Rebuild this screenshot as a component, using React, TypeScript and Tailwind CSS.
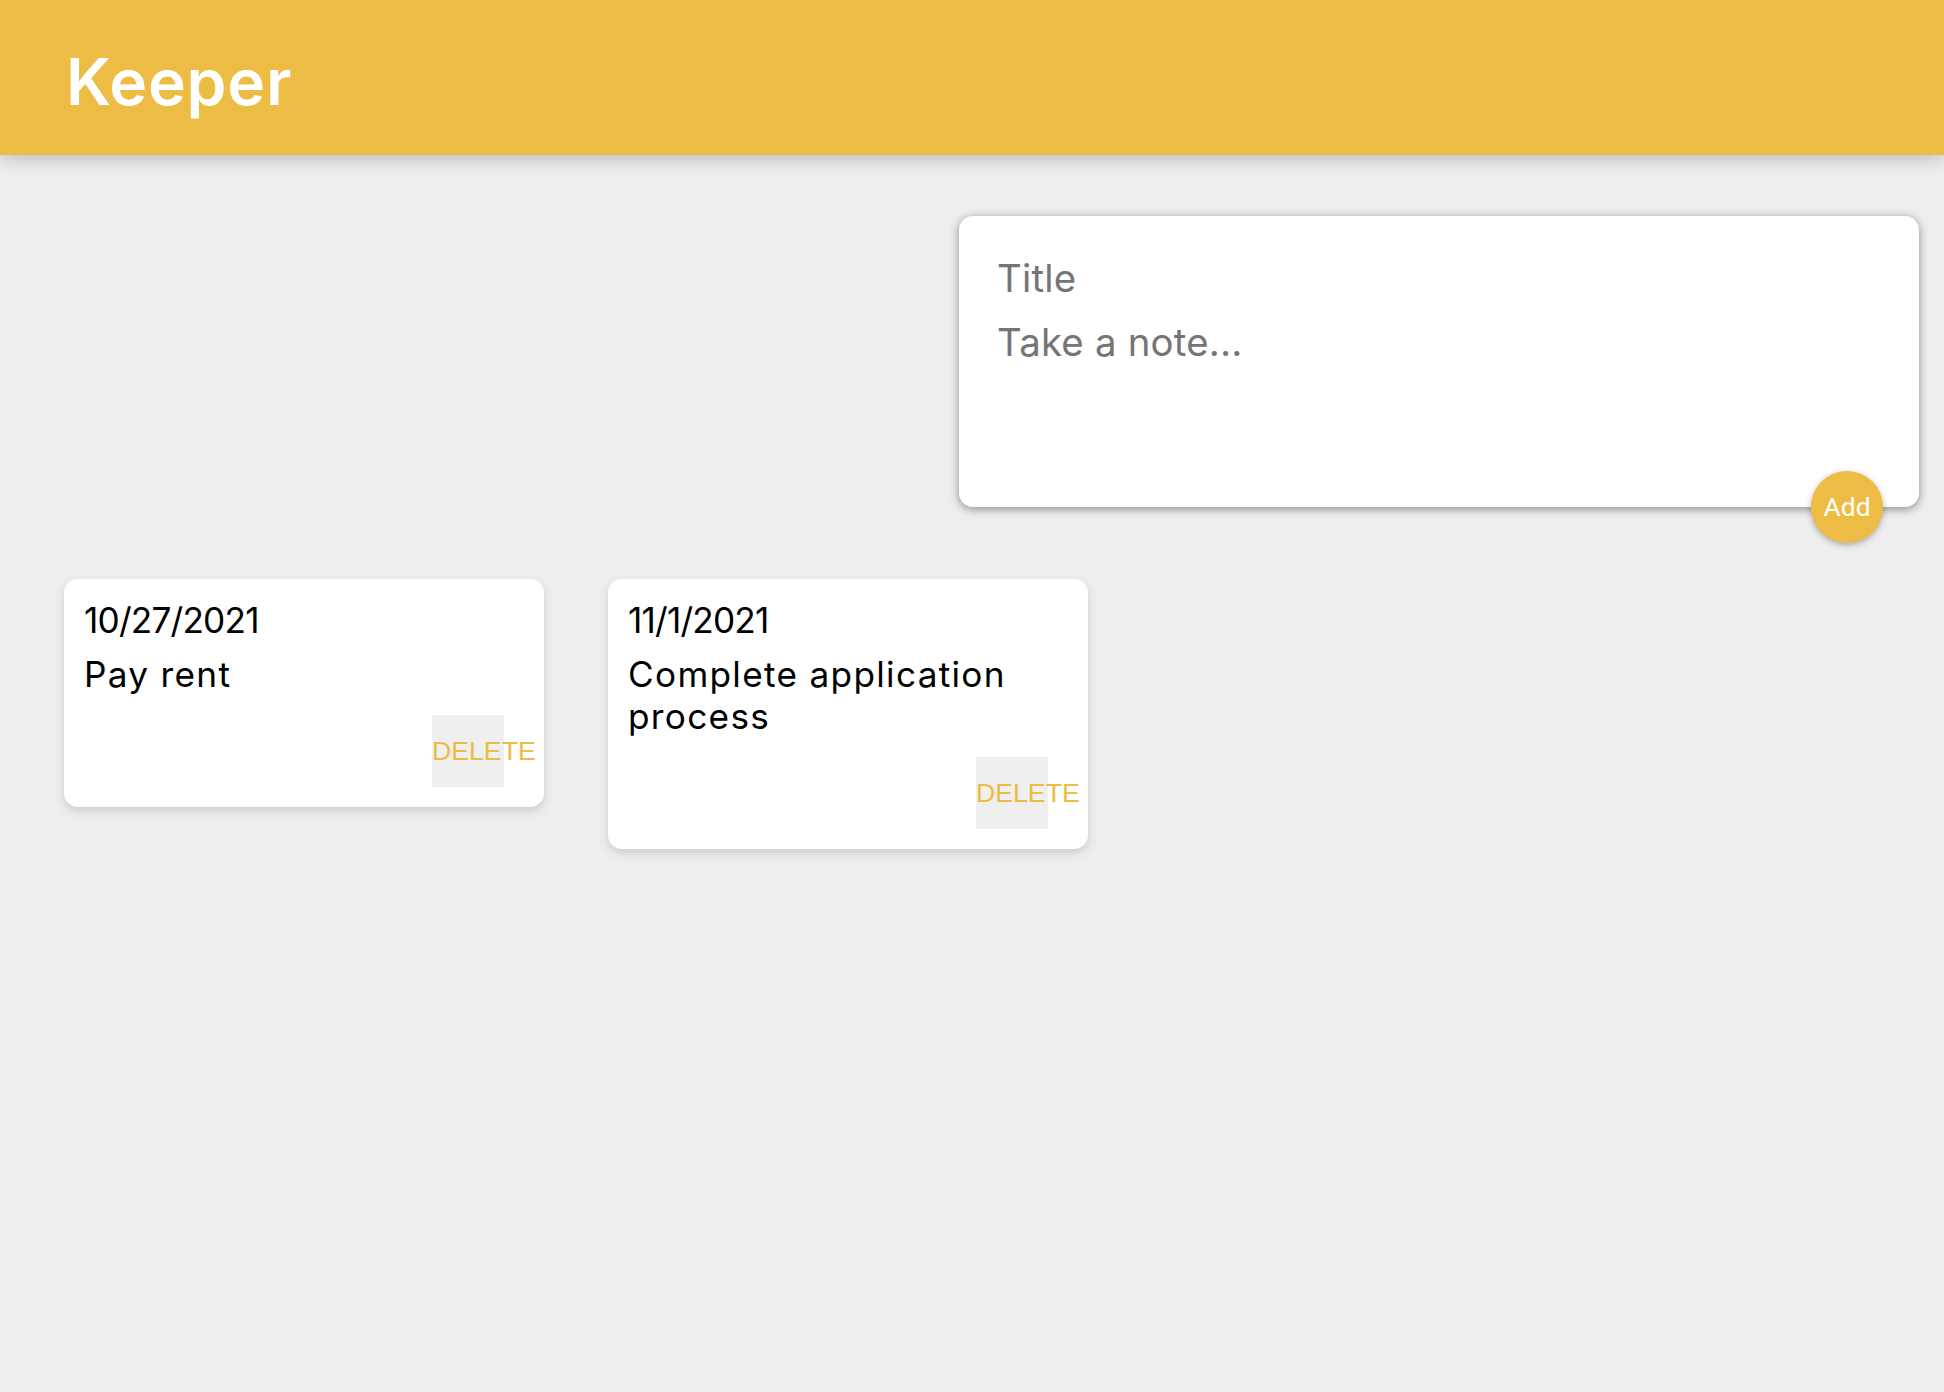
import { useState } from 'react'

type Note = { id: number; title: string; content: string }

const initialNotes: Note[] = [
  { id: 1, title: '10/27/2021', content: 'Pay rent' },
  { id: 2, title: '11/1/2021', content: 'Complete application process' },
]

function Header() {
  return (
    <header className="bg-[#ecbc44] px-[66px] pt-[36px] pb-[28px] shadow-[0_0_20px_0_rgba(0,0,0,0.3)] relative z-10">
      <h1 className="text-white text-[64px] leading-[91px] font-semibold font-['Inter',sans-serif] tracking-[0.8px]">
        Keeper
      </h1>
    </header>
  )
}

function CreateArea({ onAdd }: { onAdd: (n: Omit<Note, 'id'>) => void }) {
  const [title, setTitle] = useState('')
  const [content, setContent] = useState('')

  function submit(e: React.FormEvent) {
    e.preventDefault()
    onAdd({ title, content })
    setTitle('')
    setContent('')
  }

  return (
    <form
      onSubmit={submit}
      className="relative w-[960px] ml-auto mt-[61px] mb-[40px] bg-white p-[30px] rounded-[14px] shadow-[0_2px_10px_rgb(138,137,137)]"
    >
      <input
        value={title}
        onChange={(e) => setTitle(e.target.value)}
        placeholder="Title"
        className="block w-full h-[63px] p-[8px] text-[38.4px] leading-[47px] outline-none border-none placeholder:text-[#757575] font-['Inter',sans-serif] tracking-[0.2px]"
      />
      <textarea
        value={content}
        onChange={(e) => setContent(e.target.value)}
        placeholder="Take a note..."
        rows={3}
        className="block w-full h-[168px] pt-[10px] px-[8px] pb-[6px] text-[38.4px] leading-[47px] outline-none border-none resize-none placeholder:text-[#757575] font-['Inter',sans-serif] tracking-[0.2px]"
      />
      <button
        type="submit"
        className="absolute right-[36px] bottom-[-36px] w-[72px] h-[72px] rounded-full bg-[#ecbc44] text-white text-[26.5px] font-['Roboto',sans-serif] shadow-[0_2px_6px_rgba(0,0,0,0.3)]"
      >
        Add
      </button>
    </form>
  )
}

function NoteCard({ note, onDelete }: { note: Note; onDelete: () => void }) {
  return (
    <div className="w-[480px] m-[32px] p-[20px] bg-white rounded-[14px] shadow-[0_4px_10px_#ccc] flex flex-col font-['Inter',sans-serif] text-black">
      <h1 className="text-[35.2px] leading-[42px] font-normal mb-[12px] tracking-[-0.8px]">{note.title}</h1>
      <p className="text-[35.2px] leading-[42px] mb-[20px] tracking-[1.3px] whitespace-pre-wrap break-words">
        {note.content}
      </p>
      <button
        onClick={onDelete}
        className="self-end mr-[20px] w-[72px] h-[72px] bg-[#efefef] text-[#ecbc44] text-[26.67px] font-['Liberation_Sans',sans-serif] flex items-center justify-start overflow-visible whitespace-nowrap"
      >
        DELETE
      </button>
    </div>
  )
}

export default function App() {
  const [notes, setNotes] = useState<Note[]>(initialNotes)

  function addNote(n: Omit<Note, 'id'>) {
    setNotes((prev) => [...prev, { ...n, id: Date.now() }])
  }

  return (
    <div className="min-h-[1392px] bg-[#eeeeee]">
      <Header />
      <div className="pl-[32px] pr-[25px]">
        <CreateArea onAdd={addNote} />
        <div className="flex flex-wrap items-start">
          {notes.map((note) => (
            <NoteCard
              key={note.id}
              note={note}
              onDelete={() => setNotes((prev) => prev.filter((x) => x.id !== note.id))}
            />
          ))}
        </div>
      </div>
    </div>
  )
}
